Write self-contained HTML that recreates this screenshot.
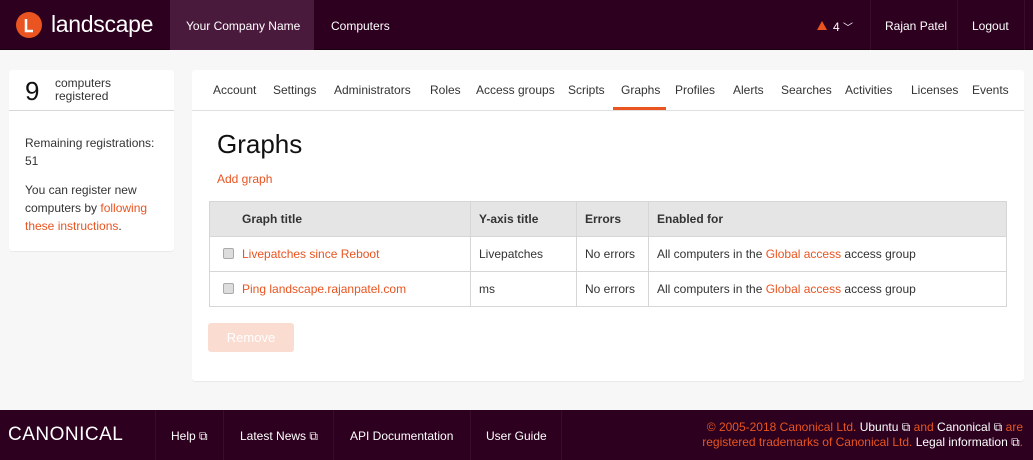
<!DOCTYPE html>
<html><head><meta charset="utf-8"><style>
*{margin:0;padding:0;box-sizing:border-box}
body{width:1033px;height:460px;overflow:hidden;background:#f7f7f7;font-family:"Liberation Sans",sans-serif;font-size:12px;color:#333;position:relative}
.a{position:absolute;white-space:nowrap}
.o{color:#e95420}
.hdr{position:absolute;left:0;top:0;width:1033px;height:50px;background:#2c001e;border-bottom:1px solid #1a0012}
.hdr .t{color:#fff;font-size:12px;top:19px}
.card{position:absolute;background:#fff;border-radius:3px;box-shadow:0 1px 1px rgba(0,0,0,.06)}
.tab{top:83px;color:#333;font-size:12px}
table{position:absolute;left:209px;top:201px;width:798px;border-collapse:collapse;font-size:12px}
td,th{border:1px solid #d6d6d6;height:35px;padding:0 8px;text-align:left}
th{background:#e5e5e5;font-weight:bold}
.cb{display:inline-block;width:11px;height:11px;border:1px solid #aaa;background:#ddd;border-radius:2px;vertical-align:-1px;margin:0 8px 0 5px}
.ft{position:absolute;left:0;top:410px;width:1033px;height:50px;background:#2c001e}
.ft .t{color:#fff;top:19px;font-size:12px}
.sep{position:absolute;top:0;width:1px;height:50px;background:#3a0c2c}
</style></head><body>
<div class="hdr">
  <div class="a" style="left:170px;top:0;width:144px;height:50px;background:#4a1a3d"></div>
  <svg class="a" style="left:16px;top:12px" width="26" height="26"><circle cx="13" cy="13" r="13" fill="#e95420"/><path d="M10 7v12h7" stroke="#fff" stroke-width="2.5" fill="none"/></svg>
  <div class="a" style="left:51px;top:11px;color:#fff;font-size:23px;letter-spacing:-0.3px">landscape</div>
  <div class="a t" style="left:186px">Your Company Name</div>
  <div class="a t" style="left:331px">Computers</div>
  <svg class="a" style="left:817px;top:21px" width="10" height="9"><path d="M5 0L10 9H0z" fill="#e95420"/></svg>
  <div class="a t" style="left:833px">4 <span style="font-size:10px">﹀</span></div>
  <div class="sep" style="left:870px"></div>
  <div class="a t" style="left:885px">Rajan Patel</div>
  <div class="sep" style="left:957px"></div>
  <div class="a t" style="left:972px">Logout</div>
  <div class="sep" style="left:1024px"></div>
</div>

<div class="card" style="left:9px;top:70px;width:165px;height:181px">
  <div class="a" style="left:0;top:40px;width:165px;height:1px;background:#d6d6d6"></div>
  <div class="a" style="left:16px;top:6px;font-size:26px;color:#111">9</div>
  <div class="a" style="left:46px;top:7px;font-size:12px;line-height:13px;color:#333">computers<br>registered</div>
  <div class="a" style="left:16px;top:64px;font-size:12px;line-height:18px">Remaining registrations:<br>51</div>
  <div class="a" style="left:16px;top:111px;font-size:12px;line-height:18px">You can register new<br>computers by <span class="o">following</span><br><span class="o">these instructions</span>.</div>
</div>

<div class="card" style="left:192px;top:70px;width:832px;height:311px">
  <div class="a" style="left:0;top:40px;width:832px;height:1px;background:#e0e0e0"></div>
  <div class="a" style="left:421px;top:37px;width:53px;height:3px;background:#e95420"></div>
</div>
<div class="a tab" style="left:213px">Account</div>
<div class="a tab" style="left:273px">Settings</div>
<div class="a tab" style="left:334px">Administrators</div>
<div class="a tab" style="left:430px">Roles</div>
<div class="a tab" style="left:476px">Access groups</div>
<div class="a tab" style="left:568px">Scripts</div>
<div class="a tab" style="left:621px">Graphs</div>
<div class="a tab" style="left:675px">Profiles</div>
<div class="a tab" style="left:733px">Alerts</div>
<div class="a tab" style="left:781px">Searches</div>
<div class="a tab" style="left:845px">Activities</div>
<div class="a tab" style="left:911px">Licenses</div>
<div class="a tab" style="left:972px">Events</div>

<div class="a" style="left:217px;top:129px;font-size:26px;color:#111">Graphs</div>
<div class="a o" style="left:217px;top:172px;font-size:12px">Add graph</div>

<table>
<tr><th style="width:261px;padding-left:32px">Graph title</th><th style="width:106px">Y-axis title</th><th style="width:72px">Errors</th><th>Enabled for</th></tr>
<tr><td style="padding-left:8px"><span class="cb"></span><span class="o">Livepatches since Reboot</span></td><td>Livepatches</td><td>No errors</td><td>All computers in the <span class="o">Global access</span> access group</td></tr>
<tr><td style="padding-left:8px"><span class="cb"></span><span class="o">Ping landscape.rajanpatel.com</span></td><td>ms</td><td>No errors</td><td>All computers in the <span class="o">Global access</span> access group</td></tr>
</table>

<div class="a" style="left:208px;top:323px;width:86px;height:29px;background:#fadcd1;border-radius:3px;color:#fff;text-align:center;line-height:29px;font-size:13px">Remove</div>

<div class="ft">
  <div class="a" style="left:8px;top:14px;color:#fff;font-size:19px;letter-spacing:0.5px">CANONICAL</div>
  <div class="sep" style="left:155px"></div>
  <div class="a t" style="left:171px">Help ⧉</div>
  <div class="sep" style="left:223px"></div>
  <div class="a t" style="left:240px">Latest News ⧉</div>
  <div class="sep" style="left:333px"></div>
  <div class="a t" style="left:350px">API Documentation</div>
  <div class="sep" style="left:470px"></div>
  <div class="a t" style="left:486px">User Guide</div>
  <div class="sep" style="left:561px"></div>
  <div class="a" style="right:10px;top:10px;text-align:right;font-size:12px;line-height:15px;color:#e95420">© 2005-2018 Canonical Ltd. <span style="color:#fff">Ubuntu ⧉</span> and <span style="color:#fff">Canonical ⧉</span> are<br>registered trademarks of Canonical Ltd. <span style="color:#fff">Legal information ⧉</span>.</div>
</div>
</body></html>
